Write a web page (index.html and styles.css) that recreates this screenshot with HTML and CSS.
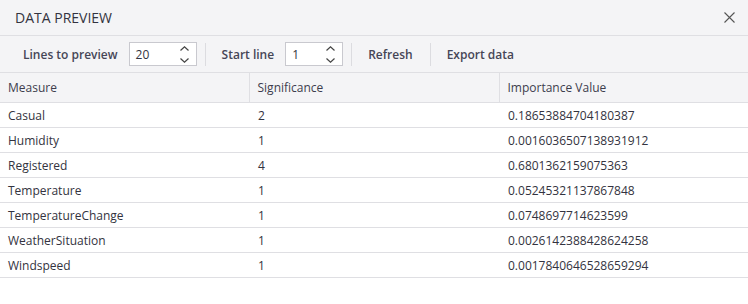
FILE: index.html
```html
<!DOCTYPE html>
<html>
<head>
<meta charset="utf-8">
<link rel="stylesheet" href="styles.css">
</head>
<body>
<div class="dialog">
  <div class="titlebar">
    <span class="title">DATA PREVIEW</span>
    <svg class="close" width="11" height="11" viewBox="0 0 11 11"><path d="M0.5 0.5 L10.5 10.5 M10.5 0.5 L0.5 10.5" stroke="#555" stroke-width="1.1" fill="none"/></svg>
  </div>
  <div class="toolbar">
    <span class="label">Lines to preview</span>
    <div class="spin spin-lines">
      <span class="val">20</span>
      <span class="arrows">
        <svg width="9" height="5" viewBox="0 0 9 5"><path d="M0.5 4.5 L4.5 0.8 L8.5 4.5" stroke="#444" stroke-width="1.2" fill="none"/></svg>
        <svg width="9" height="5" viewBox="0 0 9 5"><path d="M0.5 0.5 L4.5 4.2 L8.5 0.5" stroke="#444" stroke-width="1.2" fill="none"/></svg>
      </span>
    </div>
    <span class="sep"></span>
    <span class="label">Start line</span>
    <div class="spin spin-start">
      <span class="val">1</span>
      <span class="arrows">
        <svg width="9" height="5" viewBox="0 0 9 5"><path d="M0.5 4.5 L4.5 0.8 L8.5 4.5" stroke="#444" stroke-width="1.2" fill="none"/></svg>
        <svg width="9" height="5" viewBox="0 0 9 5"><path d="M0.5 0.5 L4.5 4.2 L8.5 0.5" stroke="#444" stroke-width="1.2" fill="none"/></svg>
      </span>
    </div>
    <span class="sep"></span>
    <span class="btn">Refresh</span>
    <span class="sep"></span>
    <span class="btn">Export data</span>
  </div>
  <table class="grid">
    <thead>
      <tr><th>Measure</th><th>Significance</th><th>Importance Value</th></tr>
    </thead>
    <tbody>
      <tr><td>Casual</td><td>2</td><td>0.18653884704180387</td></tr>
      <tr><td>Humidity</td><td>1</td><td>0.0016036507138931912</td></tr>
      <tr><td>Registered</td><td>4</td><td>0.6801362159075363</td></tr>
      <tr><td>Temperature</td><td>1</td><td>0.05245321137867848</td></tr>
      <tr><td>TemperatureChange</td><td>1</td><td>0.0748697714623599</td></tr>
      <tr><td>WeatherSituation</td><td>1</td><td>0.0026142388428624258</td></tr>
      <tr><td>Windspeed</td><td>1</td><td>0.0017840646528659294</td></tr>
    </tbody>
  </table>
</div>
</body>
</html>
```
FILE: styles.css
```css
* { box-sizing: border-box; }
html, body { margin: 0; padding: 0; background: #ffffff; }
body {
  font-family: "Open Sans", "Liberation Sans", sans-serif;
  font-size: 12px;
  color: #333340;
  width: 748px;
  height: 304px;
  overflow: hidden;
}
.dialog { width: 748px; }
.titlebar {
  height: 36px;
  background: #f4f4f6;
  border-bottom: 1px solid #dfdfe3;
  display: flex;
  align-items: center;
  justify-content: space-between;
  padding: 0 13px 0 15px;
}
.title {
  font-size: 14px;
  color: #333340;
  padding-bottom: 1px;
}
.close { display: block; margin-bottom: 1px; }
.toolbar {
  height: 37px;
  background: #f4f4f6;
  border-bottom: 1px solid #dfdfe3;
  display: flex;
  align-items: center;
  padding-left: 23px;
}
.label, .btn {
  font-weight: 600;
  font-size: 12px;
  color: #464656;
}
.label { margin-right: 11px; }
.spin {
  height: 24px;
  border: 1px solid #c9c9cf;
  background: #ffffff;
  display: flex;
  align-items: center;
  justify-content: space-between;
  padding: 0 7px 0 6px;
}
.spin-lines { width: 68px; }
.spin-start { width: 58px; }
.val { color: #333340; }
.arrows {
  display: flex;
  flex-direction: column;
  gap: 7px;
}
.arrows svg { display: block; }
.sep {
  width: 1px;
  height: 23px;
  background: #dcdce0;
  margin: 0 16px 0 8px;
}
.btn + .sep { margin-left: 17px; }
.grid {
  width: 748px;
  border-collapse: collapse;
  table-layout: fixed;
}
.grid th, .grid td {
  text-align: left;
  font-weight: normal;
  padding: 0 8px;
  white-space: nowrap;
}
.grid th {
  height: 29px;
  background: #f4f4f6;
  color: #3d3d4d;
  border-bottom: 1px solid #dfdfe3;
  border-left: 1px solid #dfdfe3;
}
.grid th:first-child { border-left: none; width: 249px; }
.grid th:nth-child(2) { width: 250px; }
.grid td {
  height: 25px;
  padding-top: 1px;
  border-bottom: 1px solid #dfdfe3;
  color: #333340;
}
.grid td:nth-child(2), .grid td:nth-child(3) { padding-left: 9px; }
```
